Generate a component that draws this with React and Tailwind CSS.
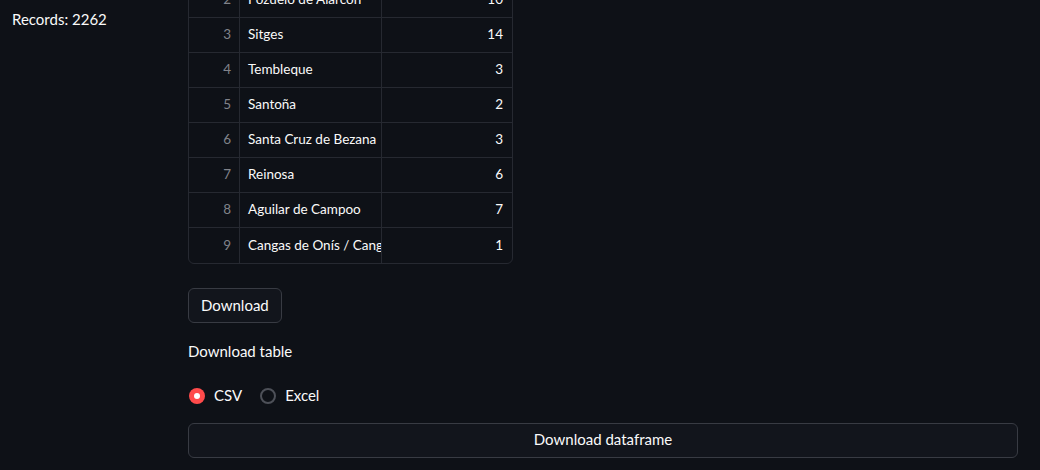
export default function App() {
  const rows = [
    [2, "Pozuelo de Alarcón", 10],
    [3, "Sitges", 14],
    [4, "Tembleque", 3],
    [5, "Santoña", 2],
    [6, "Santa Cruz de Bezana", 3],
    [7, "Reinosa", 6],
    [8, "Aguilar de Campoo", 7],
    [9, "Cangas de Onís / Cangues d'Onís", 1],
  ];
  return (
    <div
      className="w-[1040px] h-[470px] overflow-hidden bg-[#0e1117] text-[#fafafa] flex"
      style={{ fontFamily: "Lato, 'Noto Sans', sans-serif" }}
    >
      <div className="w-[188px] shrink-0 pl-3 pt-[9px] text-[15px] leading-[20px]">Records: 2262</div>
      <div className="w-[830px] flex flex-col">
        <div className="mt-[-18px] w-[325px] border border-[#262931] rounded-b-[6px] overflow-hidden text-[13.5px]">
          {rows.map((r, i) => (
            <div
              key={r[0]}
              className={`flex h-[35px] ${i < rows.length - 1 ? "border-b border-[#262931]" : ""}`}
            >
              <div className="w-[51px] shrink-0 border-r border-[#262931] flex items-center justify-end pr-[8px] pb-[1px] text-[#81838a]">
                {r[0]}
              </div>
              <div className="w-[142px] shrink-0 border-r border-[#262931] flex items-center pl-[8px] pb-[1px] whitespace-nowrap overflow-hidden">
                {r[1]}
              </div>
              <div className="flex-1 flex items-center justify-end pr-[9px] pb-[1px]">{r[2]}</div>
            </div>
          ))}
        </div>
        <div className="mt-[24px]">
          <button className="h-[35px] px-[12px] pb-[2px] rounded-[6px] border border-[#383b43] bg-[#12151c] text-[15px] leading-[20px]">
            Download
          </button>
        </div>
        <div className="mt-[18px] text-[15px] leading-[20px]">Download table</div>
        <div className="mt-[23px] flex items-center h-[24px] text-[15px]">
          <div className="flex items-center mr-[16px]">
            <span className="w-[16px] h-[16px] rounded-full bg-[#ff4b4b] flex items-center justify-center ml-[1px]">
              <span className="w-[6px] h-[6px] rounded-full bg-white" />
            </span>
            <span className="ml-[9px] pb-[1px]">CSV</span>
          </div>
          <div className="flex items-center">
            <span className="w-[16px] h-[16px] rounded-full border-2 border-[#4d5058] ml-[2px]" />
            <span className="ml-[9px] pb-[1px]">Excel</span>
          </div>
        </div>
        <button className="mt-[15px] w-[830px] h-[35px] pb-[2px] rounded-[6px] border border-[#383b43] bg-[#12151c] text-[15px]">
          Download dataframe
        </button>
      </div>
    </div>
  );
}
